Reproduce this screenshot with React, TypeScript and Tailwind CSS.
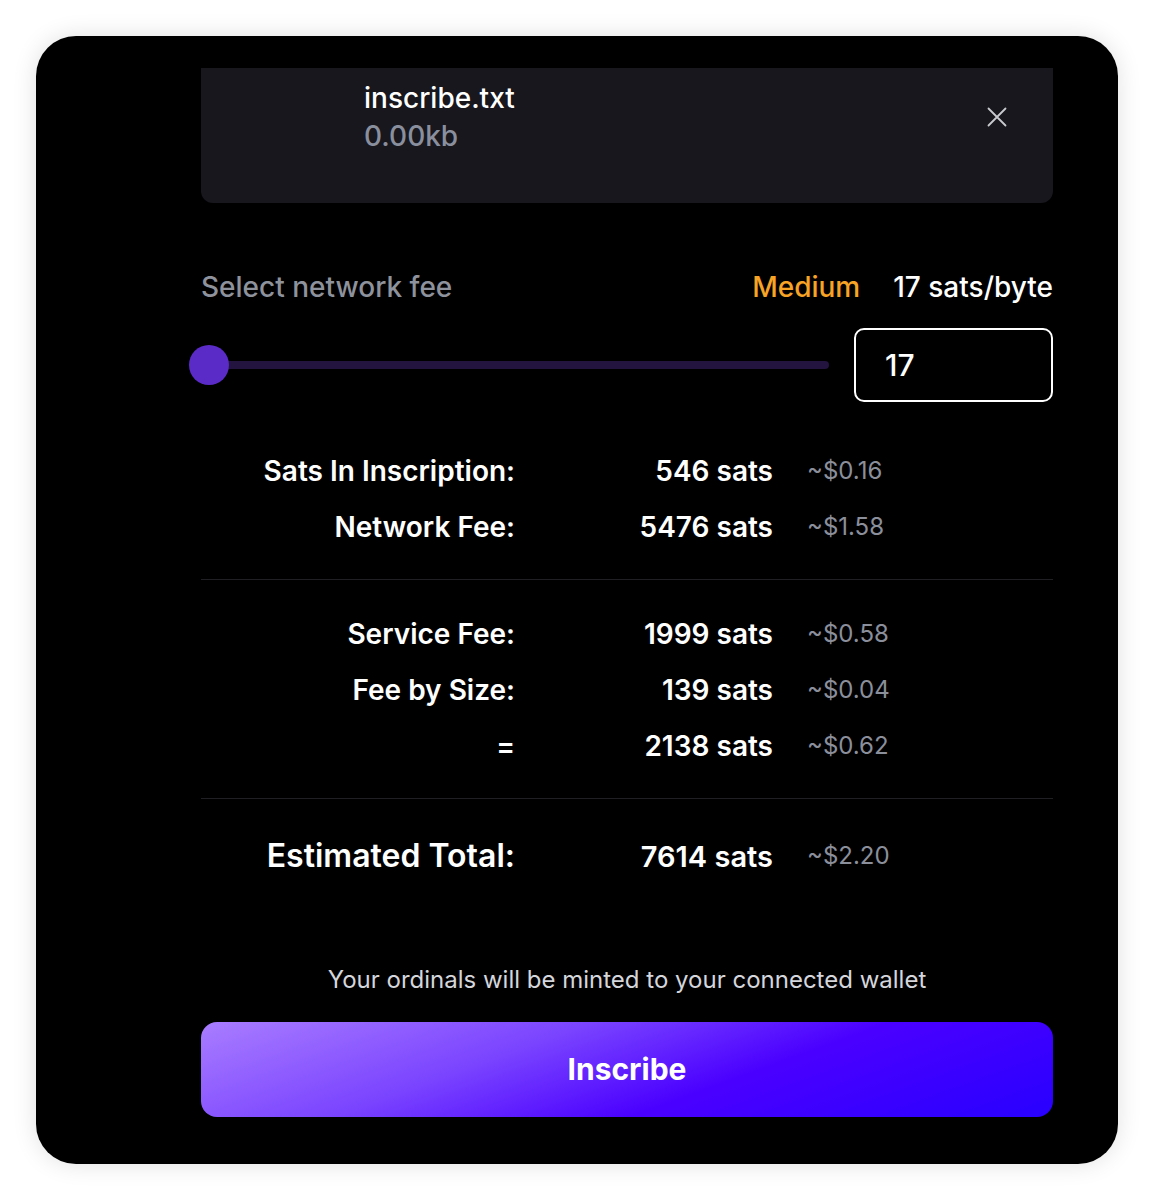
import React from "react";

const rows1 = [
  { label: "Sats In Inscription:", value: "546 sats", usd: "~$0.16" },
  { label: "Network Fee:", value: "5476 sats", usd: "~$1.58" },
];
const rows2 = [
  { label: "Service Fee:", value: "1999 sats", usd: "~$0.58" },
  { label: "Fee by Size:", value: "139 sats", usd: "~$0.04" },
  { label: "=", value: "2138 sats", usd: "~$0.62" },
];

function Row({ label, value, usd }: { label: string; value: string; usd: string }) {
  return (
    <div className="grid h-[56px] grid-cols-[314px_258px_1fr] items-center leading-none">
      <div className="text-right text-[28px] font-semibold text-white">{label}</div>
      <div className="text-right text-[28px] font-semibold text-white">{value}</div>
      <div className="pl-[34px] text-[24px] text-[#8b8f9b]">{usd}</div>
    </div>
  );
}

export default function App() {
  return (
    <div className="min-h-[1200px] bg-white p-[36px]" style={{ fontFamily: "Inter, 'Noto Sans', sans-serif" }}>
      <div className="rounded-[40px] bg-black pb-[47px] pl-[165px] pr-[65px] pt-[32px] shadow-[0_0_24px_rgba(0,0,0,0.12)]">
        <div className="w-[852px]">
          {/* file box */}
          <div className="flex h-[135px] items-start justify-between rounded-b-xl bg-[#17171d] pl-[163px] pr-[46px] pt-[11px]">
            <div className="leading-[38px]">
              <div className="text-[28px] font-medium text-white">inscribe.txt</div>
              <div className="text-[28px] font-medium text-[#8a8f9e]">0.00kb</div>
            </div>
            <svg className="mt-[28px]" width="20" height="20" viewBox="0 0 20 20" fill="none" stroke="#c9cad0" strokeWidth="1.8" strokeLinecap="round">
              <path d="M1.5 1.5L18.5 18.5M18.5 1.5L1.5 18.5" />
            </svg>
          </div>

          {/* fee label */}
          <div className="mt-[66px] flex h-[36px] items-center justify-between text-[28px] font-medium leading-none">
            <span className="text-[#8e929c]">Select network fee</span>
            <div className="flex gap-[33px]">
              <span className="text-[#f7a325]">Medium</span>
              <span className="text-white">17 sats/byte</span>
            </div>
          </div>

          {/* slider */}
          <div className="mt-[23px] flex items-center gap-[25px]">
            <div className="relative h-[74px] flex-1">
              <div className="absolute left-0 right-0 top-[33px] h-[8px] rounded-full bg-[#23133f]" />
              <div className="absolute left-[-12px] top-[17px] h-[40px] w-[40px] rounded-full bg-[#5a2bc6]" />
            </div>
            <div className="flex h-[74px] w-[199px] items-center rounded-[10px] border-2 border-white pl-[29px] text-[30px] font-medium text-white">
              17
            </div>
          </div>

          {/* rows */}
          <div className="border-b border-[#1f1f24] pb-[24px] pt-[41px]">
            {rows1.map((r) => (
              <Row key={r.label} {...r} />
            ))}
          </div>
          <div className="border-b border-[#1f1f24] pb-[24px] pt-[26px]">
            {rows2.map((r) => (
              <Row key={r.label} {...r} />
            ))}
          </div>
          <div className="mt-[29px] grid h-[56px] grid-cols-[314px_258px_1fr] items-center leading-none">
            <div className="text-right text-[32px] font-semibold text-white">Estimated Total:</div>
            <div className="text-right text-[29px] font-semibold text-white">7614 sats</div>
            <div className="pl-[34px] text-[24px] text-[#8b8f9b]">~$2.20</div>
          </div>

          <div className="mt-[78px] h-[36px] text-center text-[24px] leading-[36px] text-[#d4d6dc]">
            Your ordinals will be minted to your connected wallet
          </div>

          <button className="mt-[24px] flex h-[95px] w-full items-center justify-center rounded-[16px] bg-[linear-gradient(160deg,#a97dff_0%,#7a44ff_35%,#4a00ff_62%,#2800ff_100%)] text-[30px] font-bold text-white">
            Inscribe
          </button>
        </div>
      </div>
    </div>
  );
}
